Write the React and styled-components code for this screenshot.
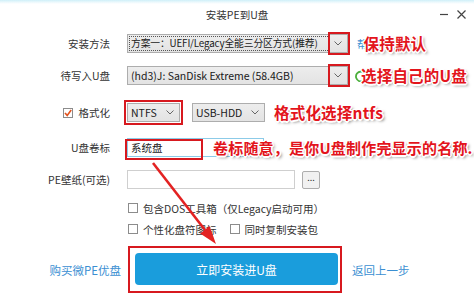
import React from "react";
import styled, { createGlobalStyle } from "styled-components";

const GlobalStyle = createGlobalStyle`
  html, body {
    margin: 0;
    padding: 0;
    background: #fff;
  }
  body {
    font-family: "Noto Sans CJK SC", "Liberation Sans", sans-serif;
  }
`;

const Window = styled.div`
  position: relative;
  width: 474px;
  height: 296px;
  overflow: hidden;
  background: #fff;
  color: #333;
`;

const TitleBar = styled.div`
  height: 28px;
  display: grid;
  grid-template-columns: 1fr auto 1fr;
  align-items: center;
  background: linear-gradient(#cfeff9 0, #eaf8fc 2px, #fff 4px);
`;

const Title = styled.div`
  grid-column: 2;
  font-size: 10.5px;
  color: #333;
  padding-top: 1px;
`;

const WinControls = styled.div`
  justify-self: end;
  display: flex;
  align-items: center;
  gap: 9px;
  padding-right: 8px;
`;

const Form = styled.div`
  display: flex;
  flex-direction: column;
`;

const Row = styled.div`
  display: grid;
  grid-template-columns: 110px auto;
  column-gap: 17px;
  align-items: center;
  height: 19px;
  margin-top: ${(p) => p.top}px;
`;

const Label = styled.div`
  display: flex;
  justify-content: flex-end;
  align-items: center;
  gap: 6px;
  font-size: 10.5px;
  white-space: nowrap;
  color: #333;
`;

const Controls = styled.div`
  display: flex;
  align-items: center;
  height: 100%;
  white-space: nowrap;
`;

const SelectBox = styled.div`
  position: relative;
  box-sizing: border-box;
  width: ${(p) => p.w}px;
  height: 19px;
  margin-left: ${(p) => p.ml || 0}px;
  border: 1px solid #adadad;
  background: linear-gradient(#ededed, #e3e3e3);
  display: flex;
  align-items: center;
  padding: 0 5px 0 1px;
  font-size: 10.5px;
  color: #1a1a1a;
  outline: ${(p) => (p.marked ? "2px solid #d7191f" : "none")};
  outline-offset: 1px;
`;

const SelectText = styled.span`
  flex: 1;
  overflow: hidden;
  white-space: nowrap;
  font-size: ${(p) => (p.small ? 9.8 : 10.5)}px;
  letter-spacing: ${(p) => (p.small ? -0.15 : 0)}px;
  line-height: 13px;
  padding: 0 1px;
  margin-right: 4px;
  border: 1px dotted ${(p) => (p.focused ? "#555" : "transparent")};
`;

const ArrowMark = styled.div`
  position: absolute;
  right: -3px;
  top: -3px;
  width: 18px;
  height: 19px;
  border: 2px solid #d7191f;
`;

const InputBox = styled.div`
  position: relative;
  box-sizing: border-box;
  width: ${(p) => p.w}px;
  height: 19px;
  border: 1px solid ${(p) => (p.active ? "#8ccbe8" : "#cfcfcf")};
  background: #fff;
  display: flex;
  align-items: center;
  padding: 0 3px;
  font-size: 10.5px;
  color: #1a1a1a;
`;

const InputMark = styled.div`
  position: absolute;
  left: -3px;
  top: 0;
  width: 74px;
  height: 17px;
  border: 2px solid #d7191f;
`;

const BrowseButton = styled.div`
  box-sizing: border-box;
  width: 18px;
  height: 18px;
  margin-left: 7px;
  border: 1px solid #adadad;
  border-radius: 2px;
  background: #f1f1f1;
  font-size: 9px;
  line-height: 12px;
  text-align: center;
  color: #333;
`;

const Help = styled.span`
  margin-left: 9px;
  font-size: 10.5px;
  color: #3b8fd2;
`;

const Note = styled.span`
  position: relative;
  margin-left: ${(p) => p.ml}px;
  font-size: ${(p) => p.size || 15.5}px;
  font-weight: 700;
  line-height: 1;
  color: #e3141c;
  letter-spacing: 0.2px;
  text-shadow: -1px -1px 0 #fff, 1px -1px 0 #fff, -1px 1px 0 #fff,
    1px 1px 0 #fff, 0 -1.5px 0 #fff, 0 1.5px 0 #fff, -1.5px 0 0 #fff,
    1.5px 0 0 #fff, 2px 2px 3px rgba(0, 0, 0, 0.55);
`;

const Box = styled.span`
  box-sizing: border-box;
  width: 10px;
  height: 10px;
  border: 1px solid #8c8c8c;
  background: #fff;
  display: inline-flex;
  align-items: center;
  justify-content: center;
  flex: none;
`;

const CheckRow = styled.div`
  display: flex;
  align-items: center;
  gap: 13px;
  height: 14px;
  padding-left: 128px;
  margin-top: ${(p) => p.top}px;
`;

const CheckItem = styled.label`
  display: flex;
  align-items: center;
  gap: 5px;
  font-size: 10.5px;
  color: #333;
  white-space: nowrap;
`;

const Footer = styled.div`
  display: flex;
  align-items: center;
  margin-top: 10px;
`;

const FooterLink = styled.span`
  width: ${(p) => p.w || "auto"};
  margin-left: ${(p) => p.ml || 0}px;
  text-align: right;
  font-size: 11.5px;
  color: #3b8fd2;
  white-space: nowrap;
`;

const ButtonFrame = styled.div`
  margin-left: 7px;
  padding: 5px 2px 6px 5px;
  border: 2px solid #d7191f;
`;

const InstallButton = styled.button`
  display: block;
  width: 203px;
  height: 32px;
  border: none;
  border-radius: 4px;
  background: #1a9ddc;
  color: #fff;
  font-family: inherit;
  font-size: 12px;
  padding: 0;
`;

const Overlay = styled.svg`
  position: absolute;
  left: 0;
  top: 0;
  pointer-events: none;
`;

const Chevron = () => (
  <svg width="8" height="5" viewBox="0 0 8 5">
    <polyline points="0.5,0.5 4,4 7.5,0.5" fill="none" stroke="#666" strokeWidth="1" />
  </svg>
);

const Check = ({ checked }) => (
  <Box>
    {checked && (
      <svg width="8" height="8" viewBox="0 0 8 8">
        <polyline points="1,4 3.2,6.4 7.2,1" fill="none" stroke="#e2531e" strokeWidth="1.6" />
      </svg>
    )}
  </Box>
);

const Select = ({ w, ml, focused, small, marked, arrowMarked, children }) => (
  <SelectBox w={w} ml={ml} marked={marked}>
    <SelectText focused={focused} small={small}>
      {children}
    </SelectText>
    <Chevron />
    {arrowMarked && <ArrowMark />}
  </SelectBox>
);

const App = () => (
  <Window>
    <GlobalStyle />
    <TitleBar>
      <Title>安装PE到U盘</Title>
      <WinControls>
        <svg width="8" height="8" viewBox="0 0 8 8">
          <line x1="0" y1="4.5" x2="8" y2="4.5" stroke="#444" strokeWidth="1.2" />
        </svg>
        <svg width="9" height="9" viewBox="0 0 9 9">
          <path d="M0.5 0.5L8.5 8.5M8.5 0.5L0.5 8.5" stroke="#444" strokeWidth="1.2" />
        </svg>
      </WinControls>
    </TitleBar>

    <Form>
      <Row top={6}>
        <Label>安装方法</Label>
        <Controls>
          <Select w={221} focused small arrowMarked>
            方案一：UEFI/Legacy全能三分区方式(推荐)
          </Select>
          <Help>帮</Help>
          <Note ml={-4}>保持默认</Note>
        </Controls>
      </Row>

      <Row top={13}>
        <Label>待写入U盘</Label>
        <Controls>
          <Select w={221} arrowMarked>
            (hd3)J: SanDisk Extreme (58.4GB)
          </Select>
          <svg width="12" height="12" viewBox="0 0 12 12" style={{ marginLeft: 7 }}>
            <path d="M10 3.5A5 5 0 1 0 11 6.5" fill="none" stroke="#4caf3c" strokeWidth="1.8" />
          </svg>
          <Note ml={-6}>选择自己的U盘</Note>
        </Controls>
      </Row>

      <Row top={18}>
        <Label>
          <Check checked />
          格式化
        </Label>
        <Controls>
          <Select w={53} marked>
            NTFS
          </Select>
          <Select w={73} ml={12}>
            USB-HDD
          </Select>
          <Note ml={9}>格式化选择ntfs</Note>
        </Controls>
      </Row>

      <Row top={16}>
        <Label>U盘卷标</Label>
        <Controls>
          <InputBox w={137} active>
            系统盘
            <InputMark />
          </InputBox>
          <Note ml={-51} size={15}>
            卷标随意，是你U盘制作完显示的名称.
          </Note>
        </Controls>
      </Row>

      <Row top={13}>
        <Label>PE壁纸(可选)</Label>
        <Controls>
          <InputBox w={168} />
          <BrowseButton>...</BrowseButton>
        </Controls>
      </Row>

      <CheckRow top={12}>
        <CheckItem>
          <Check />
          包含DOS工具箱（仅Legacy启动可用）
        </CheckItem>
      </CheckRow>

      <CheckRow top={7}>
        <CheckItem>
          <Check />
          个性化盘符图标
        </CheckItem>
        <CheckItem>
          <Check />
          同时复制安装包
        </CheckItem>
      </CheckRow>

      <Footer>
        <FooterLink w="121px">购买微PE优盘</FooterLink>
        <ButtonFrame>
          <InstallButton>立即安装进U盘</InstallButton>
        </ButtonFrame>
        <FooterLink ml={10}>返回上一步</FooterLink>
      </Footer>
    </Form>

    <Overlay width="474" height="296" viewBox="0 0 474 296">
      <line x1="153" y1="163" x2="205" y2="230" stroke="#e32222" strokeWidth="2.6" />
      <polygon points="216,244 200.2,233.5 209.6,226.1" fill="#e32222" />
    </Overlay>
  </Window>
);

export default App;
